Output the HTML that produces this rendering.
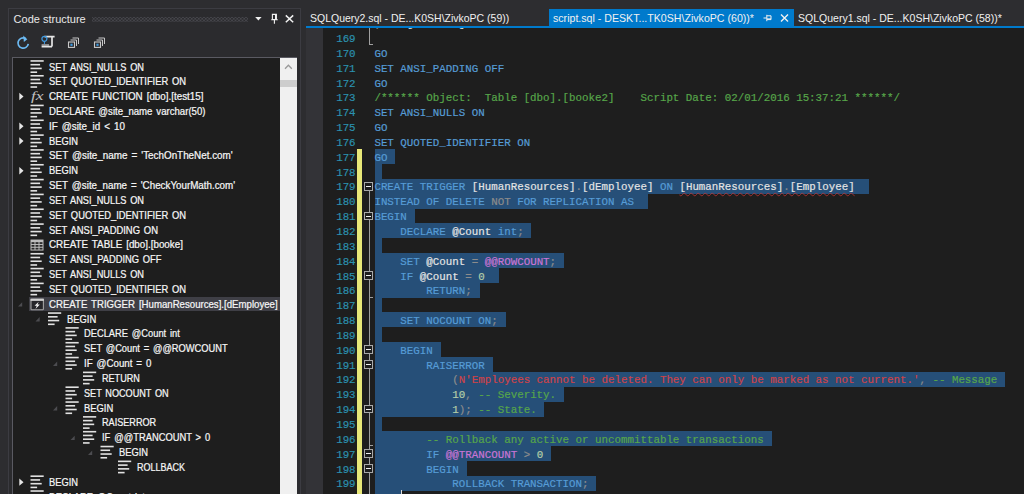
<!DOCTYPE html>
<html><head><meta charset="utf-8"><title>Code structure</title>
<style>
html,body{margin:0;padding:0}
body{width:1024px;height:494px;overflow:hidden;background:#2d2d30;position:relative;font-family:"Liberation Sans",sans-serif;color:#f1f1f1}
.abs{position:absolute}
#panel{left:8px;top:8px;width:293px;height:500px;border:1px solid #3c3c42;background:#2b2b2e;box-sizing:border-box}
#title{left:13.6px;top:12px;font-size:11px;line-height:15px;color:#e8e8e8;white-space:pre}
#grip{left:92px;top:17px;width:156px;height:5px;background-image:radial-gradient(circle,#48484e 0.6px,transparent 0.9px),radial-gradient(circle,#48484e 0.6px,transparent 0.9px);background-size:3.5px 3.5px;background-position:0 0,1.75px 1.75px}
#list{left:12px;top:57px;width:285px;height:450px;background:#1e1e1e;border-left:1px solid #5a5a62;border-top:1px solid #5a5a62;box-sizing:border-box}
#sb{left:280px;top:58px;width:17px;height:440px;background:#f0f0f0}
#thumb{left:280px;top:80px;width:17px;height:7px;background:#cdcdcd}
.row{position:absolute;left:0;height:15px;white-space:pre;font-size:10.1px;line-height:15px;color:#f6f6f6;-webkit-text-stroke:0.22px #f6f6f6;word-spacing:1.3px}
.row span{display:inline-block;transform-origin:0 50%}
#sel{left:29px;width:251px;height:14px;background:#3f3f46}
#tabline{left:306px;top:26px;width:718px;height:2px;background:#007acc}
#atab{left:549px;top:9px;width:245px;height:18px;background:#007acc}
.tab{position:absolute;top:11px;font-size:10.6px;line-height:15px;color:#f1f1f1;white-space:pre}
.tab span{display:inline-block;transform-origin:0 50%}
#strip{left:306px;top:27px;width:17px;height:470px;background:#333337}
#ed{left:323px;top:27px;width:701px;height:470px;background:#1e1e1e;overflow:hidden}
.ln,.cl{position:absolute;font-family:"Liberation Mono",monospace;font-size:10.82px;-webkit-text-stroke:0.18px currentColor;line-height:15px;height:15px;white-space:pre}
.ln{color:#2b91af;width:40px;text-align:right}
.k{color:#569cd6}.i{color:#e4e4e4}.o{color:#8c8c8c}.c{color:#57a64a}.s{color:#cf4349}.f{color:#c975d5}.n{color:#b5cea8}
.u{text-decoration:underline wavy rgba(200,50,50,.75);text-decoration-thickness:0.6px;text-underline-offset:1.5px}
.selb{position:absolute;background:#264f78}
.box{position:absolute;width:8.6px;height:8.6px;box-sizing:border-box;border:1px solid #a9a9a9;background:#1e1e1e}
.box i{position:absolute;left:1px;top:3px;width:5px;height:1px;background:#f0f0f0}
.vl{position:absolute;width:1px;background:#a0a0a0}
.hl{position:absolute;height:1px;background:#a0a0a0}
</style></head><body>

<div id="panel" class="abs"></div>
<div id="title" class="abs">Code structure</div>
<div id="grip" class="abs"></div>
<svg class="abs" style="left:254px;top:12px" width="42" height="14" viewBox="0 0 42 14">
<path d="M1.2 5 L7.6 5 L4.4 8.4 Z" fill="#f1f1f1"/>
<path d="M18.4 2.4 H22.4 V7.6 H18.4 Z M17.2 7.8 H23.8 M20.4 8 V11.8" fill="none" stroke="#f1f1f1" stroke-width="1.1"/>
<path d="M21.6 2.6 V7.4" stroke="#f1f1f1" stroke-width="1.2"/>
<path d="M31.8 3.4 L39.2 10.2 M39.2 3.4 L31.8 10.2" stroke="#f1f1f1" stroke-width="1.5" fill="none"/>
</svg>
<svg class="abs" style="left:16px;top:34px" width="92" height="17" viewBox="0 0 92 17">
<g fill="none" stroke="#6cbaf3" stroke-width="1.7">
<path d="M9.4 4.3 A5.2 5.2 0 1 0 12.3 9.9"/>
</g>
<path d="M7.2 1.5 L11.3 5.2 L7.9 8 Z" fill="#6cbaf3"/>
<g>
<path d="M28.5 2.6 H38.6 M36 2.6 V12.6 M25.6 12.6 H36" stroke="#e6e6e6" stroke-width="1.7" fill="none"/>
<path d="M25.6 11 H33" stroke="#e6e6e6" stroke-width="1" fill="none"/>
<circle cx="28.4" cy="4.8" r="2.5" fill="none" stroke="#3f9ae0" stroke-width="1.2"/>
<path d="M28.4 7.6 V10" stroke="#3f9ae0" stroke-width="1"/>
</g>
<g fill="none" stroke="#c8c8c8" stroke-width="1">
<path d="M56.5 4 H62.5 V10"/><path d="M54.5 6 H60.5 V12" />
<rect x="52.5" y="8" width="6" height="5.4" stroke-width="1.1"/>
</g>
<rect x="54.4" y="9.7" width="2.2" height="2.2" fill="#3f9ae0"/>
<g fill="none" stroke="#c8c8c8" stroke-width="1">
<path d="M82.5 4 H88.5 V10"/><path d="M80.5 6 H86.5 V12" />
<rect x="78.5" y="8" width="6" height="5.4" stroke-width="1.1"/>
</g>
<rect x="80.4" y="9.7" width="2.2" height="2.2" fill="#3f9ae0"/>
</svg>
<div id="list" class="abs"></div>
<div id="sel" class="abs" style="top:296.78px"></div>
<svg class="abs" style="left:0;top:0" width="300" height="494" viewBox="0 0 300 494"><rect x="30.50" y="60.15" width="13.2" height="1.6" fill="#e2e2e2"/><rect x="30.50" y="63.90" width="9.6" height="1.6" fill="#e2e2e2"/><rect x="30.50" y="67.65" width="11.2" height="1.6" fill="#e2e2e2"/><rect x="30.50" y="71.40" width="6.6" height="1.6" fill="#e2e2e2"/><rect x="30.50" y="74.98" width="13.2" height="1.6" fill="#e2e2e2"/><rect x="30.50" y="78.73" width="9.6" height="1.6" fill="#e2e2e2"/><rect x="30.50" y="82.48" width="11.2" height="1.6" fill="#e2e2e2"/><rect x="30.50" y="86.23" width="6.6" height="1.6" fill="#e2e2e2"/><text x="31.00" y="100.26" font-family="Liberation Serif,serif" font-style="italic" font-size="12.2" fill="#c0c0c0" textLength="12.6" lengthAdjust="spacingAndGlyphs">fx</text><path d="M19.30 92.86 L23.50 96.56 L19.30 100.26 Z" fill="#e6e6e6"/><rect x="30.50" y="104.64" width="13.2" height="1.6" fill="#e2e2e2"/><rect x="30.50" y="108.39" width="9.6" height="1.6" fill="#e2e2e2"/><rect x="30.50" y="112.14" width="11.2" height="1.6" fill="#e2e2e2"/><rect x="30.50" y="115.89" width="6.6" height="1.6" fill="#e2e2e2"/><rect x="30.50" y="119.47" width="13.2" height="1.6" fill="#e2e2e2"/><rect x="30.50" y="123.22" width="9.6" height="1.6" fill="#e2e2e2"/><rect x="30.50" y="126.97" width="11.2" height="1.6" fill="#e2e2e2"/><rect x="30.50" y="130.72" width="6.6" height="1.6" fill="#e2e2e2"/><path d="M19.30 122.52 L23.50 126.22 L19.30 129.92 Z" fill="#e6e6e6"/><rect x="30.50" y="134.30" width="13.2" height="1.6" fill="#e2e2e2"/><rect x="30.50" y="138.05" width="9.6" height="1.6" fill="#e2e2e2"/><rect x="30.50" y="141.80" width="11.2" height="1.6" fill="#e2e2e2"/><rect x="30.50" y="145.55" width="6.6" height="1.6" fill="#e2e2e2"/><path d="M19.30 137.35 L23.50 141.05 L19.30 144.75 Z" fill="#e6e6e6"/><rect x="30.50" y="149.13" width="13.2" height="1.6" fill="#e2e2e2"/><rect x="30.50" y="152.88" width="9.6" height="1.6" fill="#e2e2e2"/><rect x="30.50" y="156.63" width="11.2" height="1.6" fill="#e2e2e2"/><rect x="30.50" y="160.38" width="6.6" height="1.6" fill="#e2e2e2"/><rect x="30.50" y="163.96" width="13.2" height="1.6" fill="#e2e2e2"/><rect x="30.50" y="167.71" width="9.6" height="1.6" fill="#e2e2e2"/><rect x="30.50" y="171.46" width="11.2" height="1.6" fill="#e2e2e2"/><rect x="30.50" y="175.21" width="6.6" height="1.6" fill="#e2e2e2"/><path d="M19.30 167.01 L23.50 170.71 L19.30 174.41 Z" fill="#e6e6e6"/><rect x="30.50" y="178.79" width="13.2" height="1.6" fill="#e2e2e2"/><rect x="30.50" y="182.54" width="9.6" height="1.6" fill="#e2e2e2"/><rect x="30.50" y="186.29" width="11.2" height="1.6" fill="#e2e2e2"/><rect x="30.50" y="190.04" width="6.6" height="1.6" fill="#e2e2e2"/><rect x="30.50" y="193.62" width="13.2" height="1.6" fill="#e2e2e2"/><rect x="30.50" y="197.37" width="9.6" height="1.6" fill="#e2e2e2"/><rect x="30.50" y="201.12" width="11.2" height="1.6" fill="#e2e2e2"/><rect x="30.50" y="204.87" width="6.6" height="1.6" fill="#e2e2e2"/><rect x="30.50" y="208.45" width="13.2" height="1.6" fill="#e2e2e2"/><rect x="30.50" y="212.20" width="9.6" height="1.6" fill="#e2e2e2"/><rect x="30.50" y="215.95" width="11.2" height="1.6" fill="#e2e2e2"/><rect x="30.50" y="219.70" width="6.6" height="1.6" fill="#e2e2e2"/><rect x="30.50" y="223.28" width="13.2" height="1.6" fill="#e2e2e2"/><rect x="30.50" y="227.03" width="9.6" height="1.6" fill="#e2e2e2"/><rect x="30.50" y="230.78" width="11.2" height="1.6" fill="#e2e2e2"/><rect x="30.50" y="234.53" width="6.6" height="1.6" fill="#e2e2e2"/><rect x="30.50" y="239.56" width="13" height="11" fill="#bdbdbd"/><rect x="31.50" y="242.16" width="3" height="1.8" fill="#2a2a2a"/><rect x="31.50" y="244.96" width="3" height="1.8" fill="#2a2a2a"/><rect x="31.50" y="247.76" width="3" height="1.8" fill="#2a2a2a"/><rect x="35.50" y="242.16" width="3" height="1.8" fill="#2a2a2a"/><rect x="35.50" y="244.96" width="3" height="1.8" fill="#2a2a2a"/><rect x="35.50" y="247.76" width="3" height="1.8" fill="#2a2a2a"/><rect x="39.50" y="242.16" width="3" height="1.8" fill="#2a2a2a"/><rect x="39.50" y="244.96" width="3" height="1.8" fill="#2a2a2a"/><rect x="39.50" y="247.76" width="3" height="1.8" fill="#2a2a2a"/><rect x="30.50" y="252.94" width="13.2" height="1.6" fill="#e2e2e2"/><rect x="30.50" y="256.69" width="9.6" height="1.6" fill="#e2e2e2"/><rect x="30.50" y="260.44" width="11.2" height="1.6" fill="#e2e2e2"/><rect x="30.50" y="264.19" width="6.6" height="1.6" fill="#e2e2e2"/><rect x="30.50" y="267.77" width="13.2" height="1.6" fill="#e2e2e2"/><rect x="30.50" y="271.52" width="9.6" height="1.6" fill="#e2e2e2"/><rect x="30.50" y="275.27" width="11.2" height="1.6" fill="#e2e2e2"/><rect x="30.50" y="279.02" width="6.6" height="1.6" fill="#e2e2e2"/><rect x="30.50" y="282.60" width="13.2" height="1.6" fill="#e2e2e2"/><rect x="30.50" y="286.35" width="9.6" height="1.6" fill="#e2e2e2"/><rect x="30.50" y="290.10" width="11.2" height="1.6" fill="#e2e2e2"/><rect x="30.50" y="293.85" width="6.6" height="1.6" fill="#e2e2e2"/><rect x="31.00" y="299.18" width="12.4" height="10.6" rx="0.8" fill="#26262a" stroke="#a2a2a2" stroke-width="1.1"/><rect x="30.50" y="298.68" width="13.4" height="2.2" fill="#d0d0d0"/><path d="M38.70 301.68 L34.60 305.68 H36.80 L35.50 308.88 L39.80 304.48 H37.50 Z" fill="#f4f4f4"/><path d="M22.20 302.18 V306.58 H18.00 Z" fill="#4c4c50"/><rect x="48.00" y="312.26" width="13.2" height="1.6" fill="#e2e2e2"/><rect x="48.00" y="316.01" width="9.6" height="1.6" fill="#e2e2e2"/><rect x="48.00" y="319.76" width="11.2" height="1.6" fill="#e2e2e2"/><rect x="48.00" y="323.51" width="6.6" height="1.6" fill="#e2e2e2"/><path d="M39.70 317.01 V321.41 H35.50 Z" fill="#4c4c50"/><rect x="65.50" y="327.09" width="13.2" height="1.6" fill="#e2e2e2"/><rect x="65.50" y="330.84" width="9.6" height="1.6" fill="#e2e2e2"/><rect x="65.50" y="334.59" width="11.2" height="1.6" fill="#e2e2e2"/><rect x="65.50" y="338.34" width="6.6" height="1.6" fill="#e2e2e2"/><rect x="65.50" y="341.92" width="13.2" height="1.6" fill="#e2e2e2"/><rect x="65.50" y="345.67" width="9.6" height="1.6" fill="#e2e2e2"/><rect x="65.50" y="349.42" width="11.2" height="1.6" fill="#e2e2e2"/><rect x="65.50" y="353.17" width="6.6" height="1.6" fill="#e2e2e2"/><rect x="65.50" y="356.75" width="13.2" height="1.6" fill="#e2e2e2"/><rect x="65.50" y="360.50" width="9.6" height="1.6" fill="#e2e2e2"/><rect x="65.50" y="364.25" width="11.2" height="1.6" fill="#e2e2e2"/><rect x="65.50" y="368.00" width="6.6" height="1.6" fill="#e2e2e2"/><path d="M57.20 361.50 V365.90 H53.00 Z" fill="#4c4c50"/><rect x="83.00" y="371.58" width="13.2" height="1.6" fill="#e2e2e2"/><rect x="83.00" y="375.33" width="9.6" height="1.6" fill="#e2e2e2"/><rect x="83.00" y="379.08" width="11.2" height="1.6" fill="#e2e2e2"/><rect x="83.00" y="382.83" width="6.6" height="1.6" fill="#e2e2e2"/><rect x="65.50" y="386.41" width="13.2" height="1.6" fill="#e2e2e2"/><rect x="65.50" y="390.16" width="9.6" height="1.6" fill="#e2e2e2"/><rect x="65.50" y="393.91" width="11.2" height="1.6" fill="#e2e2e2"/><rect x="65.50" y="397.66" width="6.6" height="1.6" fill="#e2e2e2"/><rect x="65.50" y="401.24" width="13.2" height="1.6" fill="#e2e2e2"/><rect x="65.50" y="404.99" width="9.6" height="1.6" fill="#e2e2e2"/><rect x="65.50" y="408.74" width="11.2" height="1.6" fill="#e2e2e2"/><rect x="65.50" y="412.49" width="6.6" height="1.6" fill="#e2e2e2"/><path d="M57.20 405.99 V410.39 H53.00 Z" fill="#4c4c50"/><rect x="83.00" y="416.07" width="13.2" height="1.6" fill="#e2e2e2"/><rect x="83.00" y="419.82" width="9.6" height="1.6" fill="#e2e2e2"/><rect x="83.00" y="423.57" width="11.2" height="1.6" fill="#e2e2e2"/><rect x="83.00" y="427.32" width="6.6" height="1.6" fill="#e2e2e2"/><rect x="83.00" y="430.90" width="13.2" height="1.6" fill="#e2e2e2"/><rect x="83.00" y="434.65" width="9.6" height="1.6" fill="#e2e2e2"/><rect x="83.00" y="438.40" width="11.2" height="1.6" fill="#e2e2e2"/><rect x="83.00" y="442.15" width="6.6" height="1.6" fill="#e2e2e2"/><path d="M74.70 435.65 V440.05 H70.50 Z" fill="#4c4c50"/><rect x="100.50" y="445.73" width="13.2" height="1.6" fill="#e2e2e2"/><rect x="100.50" y="449.48" width="9.6" height="1.6" fill="#e2e2e2"/><rect x="100.50" y="453.23" width="11.2" height="1.6" fill="#e2e2e2"/><rect x="100.50" y="456.98" width="6.6" height="1.6" fill="#e2e2e2"/><path d="M92.20 450.48 V454.88 H88.00 Z" fill="#4c4c50"/><rect x="118.00" y="460.56" width="13.2" height="1.6" fill="#e2e2e2"/><rect x="118.00" y="464.31" width="9.6" height="1.6" fill="#e2e2e2"/><rect x="118.00" y="468.06" width="11.2" height="1.6" fill="#e2e2e2"/><rect x="118.00" y="471.81" width="6.6" height="1.6" fill="#e2e2e2"/><rect x="30.50" y="475.39" width="13.2" height="1.6" fill="#e2e2e2"/><rect x="30.50" y="479.14" width="9.6" height="1.6" fill="#e2e2e2"/><rect x="30.50" y="482.89" width="11.2" height="1.6" fill="#e2e2e2"/><rect x="30.50" y="486.64" width="6.6" height="1.6" fill="#e2e2e2"/><path d="M19.30 478.44 L23.50 482.14 L19.30 485.84 Z" fill="#e6e6e6"/><rect x="30.50" y="490.22" width="13.2" height="1.6" fill="#e2e2e2"/><rect x="30.50" y="493.97" width="9.6" height="1.6" fill="#e2e2e2"/><rect x="30.50" y="497.72" width="11.2" height="1.6" fill="#e2e2e2"/><rect x="30.50" y="501.47" width="6.6" height="1.6" fill="#e2e2e2"/></svg>
<div class="row" style="left:49.30px;top:59.50px"><span style="transform:scaleX(0.9139)">SET ANSI_NULLS ON</span></div>
<div class="row" style="left:49.30px;top:74.33px"><span style="transform:scaleX(0.9284)">SET QUOTED_IDENTIFIER ON</span></div>
<div class="row" style="left:49.30px;top:89.16px"><span style="transform:scaleX(0.9716)">CREATE FUNCTION [dbo].[test15]</span></div>
<div class="row" style="left:49.30px;top:103.99px"><span style="transform:scaleX(0.9525)">DECLARE @site_name varchar(50)</span></div>
<div class="row" style="left:49.30px;top:118.82px"><span style="transform:scaleX(0.9750)">IF @site_id &lt; 10</span></div>
<div class="row" style="left:49.30px;top:133.65px"><span style="transform:scaleX(0.9229)">BEGIN</span></div>
<div class="row" style="left:49.30px;top:148.48px"><span style="transform:scaleX(0.9766)">SET @site_name = &#x27;TechOnTheNet.com&#x27;</span></div>
<div class="row" style="left:49.30px;top:163.31px"><span style="transform:scaleX(0.9229)">BEGIN</span></div>
<div class="row" style="left:49.30px;top:178.14px"><span style="transform:scaleX(0.9710)">SET @site_name = &#x27;CheckYourMath.com&#x27;</span></div>
<div class="row" style="left:49.30px;top:192.97px"><span style="transform:scaleX(0.9139)">SET ANSI_NULLS ON</span></div>
<div class="row" style="left:49.30px;top:207.80px"><span style="transform:scaleX(0.9284)">SET QUOTED_IDENTIFIER ON</span></div>
<div class="row" style="left:49.30px;top:222.63px"><span style="transform:scaleX(0.9344)">SET ANSI_PADDING ON</span></div>
<div class="row" style="left:49.30px;top:237.46px"><span style="transform:scaleX(0.9716)">CREATE TABLE [dbo].[booke]</span></div>
<div class="row" style="left:49.30px;top:252.29px"><span style="transform:scaleX(0.9244)">SET ANSI_PADDING OFF</span></div>
<div class="row" style="left:49.30px;top:267.12px"><span style="transform:scaleX(0.9139)">SET ANSI_NULLS ON</span></div>
<div class="row" style="left:49.30px;top:281.95px"><span style="transform:scaleX(0.9284)">SET QUOTED_IDENTIFIER ON</span></div>
<div class="row" style="left:49.30px;top:296.78px"><span style="transform:scaleX(0.9544)">CREATE TRIGGER [HumanResources].[dEmployee]</span></div>
<div class="row" style="left:66.80px;top:311.61px"><span style="transform:scaleX(0.9293)">BEGIN</span></div>
<div class="row" style="left:84.30px;top:326.44px"><span style="transform:scaleX(0.9235)">DECLARE @Count int</span></div>
<div class="row" style="left:84.30px;top:341.27px"><span style="transform:scaleX(0.9212)">SET @Count = @@ROWCOUNT</span></div>
<div class="row" style="left:84.30px;top:356.10px"><span style="transform:scaleX(0.9631)">IF @Count = 0</span></div>
<div class="row" style="left:101.80px;top:370.93px"><span style="transform:scaleX(0.8987)">RETURN</span></div>
<div class="row" style="left:84.30px;top:385.76px"><span style="transform:scaleX(0.9044)">SET NOCOUNT ON</span></div>
<div class="row" style="left:84.30px;top:400.59px"><span style="transform:scaleX(0.9293)">BEGIN</span></div>
<div class="row" style="left:101.80px;top:415.42px"><span style="transform:scaleX(0.9031)">RAISERROR</span></div>
<div class="row" style="left:101.80px;top:430.25px"><span style="transform:scaleX(0.9281)">IF @@TRANCOUNT &gt; 0</span></div>
<div class="row" style="left:119.30px;top:445.08px"><span style="transform:scaleX(0.9261)">BEGIN</span></div>
<div class="row" style="left:136.80px;top:459.91px"><span style="transform:scaleX(0.8931)">ROLLBACK</span></div>
<div class="row" style="left:49.30px;top:474.74px"><span style="transform:scaleX(0.9229)">BEGIN</span></div>
<div class="row" style="left:49.30px;top:489.57px"><span style="transform:scaleX(0.9235)">DECLARE @Count int</span></div>
<div id="sb" class="abs"></div><div id="thumb" class="abs"></div>
<svg class="abs" style="left:280px;top:58px" width="17" height="17" viewBox="0 0 17 17"><path d="M5 10.8 L8.4 7.2 L11.8 10.8" fill="none" stroke="#9a9a9a" stroke-width="1.3"/></svg>
<div id="atab" class="abs"></div>
<div class="tab" style="left:309.8px"><span style="transform:scaleX(0.9894)">SQLQuery2.sql - DE...K0SH\ZivkoPC (59))</span></div>
<div class="tab" style="left:553px"><span style="transform:scaleX(1.0013)">script.sql - DESKT...TK0SH\ZivkoPC (60))*</span></div>
<div class="tab" style="left:798px"><span style="transform:scaleX(0.9919)">SQLQuery1.sql - DE...K0SH\ZivkoPC (58))*</span></div>
<svg class="abs" style="left:762px;top:12px" width="30" height="12" viewBox="0 0 30 12">
<path d="M1.5 6 H4.6 M4.8 2.8 V9.2 M5 3.8 H9 V7.6 H5 M5 6.9 H9" fill="none" stroke="#f1f1f1" stroke-width="1"/>
<path d="M19 2.6 L26 9.4 M26 2.6 L19 9.4" stroke="#f1f1f1" stroke-width="1.4" fill="none"/>
</svg>
<div id="strip" class="abs"></div>
<div id="ed" class="abs">
<div class="selb" style="left:51.90px;top:122.00px;width:20.28px;height:15.15px"></div>
<div class="selb" style="left:51.90px;top:136.84px;width:7.30px;height:15.15px"></div>
<div class="selb" style="left:51.90px;top:151.69px;width:494.05px;height:15.15px"></div>
<div class="selb" style="left:51.90px;top:166.53px;width:273.39px;height:15.15px"></div>
<div class="selb" style="left:51.90px;top:181.38px;width:39.75px;height:15.15px"></div>
<div class="selb" style="left:51.90px;top:196.23px;width:156.57px;height:15.15px"></div>
<div class="selb" style="left:51.90px;top:211.07px;width:7.30px;height:15.15px"></div>
<div class="selb" style="left:51.90px;top:225.92px;width:189.02px;height:15.15px"></div>
<div class="selb" style="left:51.90px;top:240.76px;width:124.12px;height:15.15px"></div>
<div class="selb" style="left:51.90px;top:255.61px;width:104.65px;height:15.15px"></div>
<div class="selb" style="left:51.90px;top:270.45px;width:7.30px;height:15.15px"></div>
<div class="selb" style="left:51.90px;top:285.30px;width:130.61px;height:15.15px"></div>
<div class="selb" style="left:51.90px;top:300.14px;width:7.30px;height:15.15px"></div>
<div class="selb" style="left:51.90px;top:314.99px;width:65.71px;height:15.15px"></div>
<div class="selb" style="left:51.90px;top:329.83px;width:117.63px;height:15.15px"></div>
<div class="selb" style="left:51.90px;top:344.68px;width:630.34px;height:15.15px"></div>
<div class="selb" style="left:51.90px;top:359.52px;width:189.02px;height:15.15px"></div>
<div class="selb" style="left:51.90px;top:374.37px;width:169.55px;height:15.15px"></div>
<div class="selb" style="left:51.90px;top:389.21px;width:7.30px;height:15.15px"></div>
<div class="selb" style="left:51.90px;top:404.06px;width:396.70px;height:15.15px"></div>
<div class="selb" style="left:51.90px;top:418.90px;width:176.04px;height:15.15px"></div>
<div class="selb" style="left:51.90px;top:433.75px;width:91.67px;height:15.15px"></div>
<div class="selb" style="left:51.90px;top:448.59px;width:221.47px;height:15.15px"></div>
<div class="selb" style="left:51.90px;top:463.44px;width:25.96px;height:14.85px"></div>
<div class="abs" style="left:78px;top:463.44px;width:1px;height:15px;background:#dcdcdc"></div>
<div class="abs" style="left:34.20px;top:122.00px;width:5px;height:400px;background:#e8e878"></div>
<div class="vl" style="left:46px;top:0;height:18.08px"></div>
<div class="hl" style="left:46px;top:17.08px;width:4px"></div>
<div class="vl" style="left:46px;top:158.69px;height:400px"></div>
<div class="hl" style="left:46px;top:269.95px;width:4px"></div>
<div class="hl" style="left:46px;top:418.40px;width:4px"></div>
<div class="box" style="left:41.20px;top:155.09px"><i></i></div>
<div class="box" style="left:41.20px;top:184.78px"><i></i></div>
<div class="box" style="left:41.20px;top:244.16px"><i></i></div>
<div class="box" style="left:41.20px;top:318.38px"><i></i></div>
<div class="box" style="left:41.20px;top:333.23px"><i></i></div>
<div class="box" style="left:41.20px;top:377.76px"><i></i></div>
<div class="box" style="left:41.20px;top:422.30px"><i></i></div>
<div class="box" style="left:41.20px;top:437.14px"><i></i></div>
<div class="ln" style="left:-7.40px;top:-9.81px">168</div>
<div class="cl" style="left:51.40px;top:-9.81px"><span class="o">) </span><span class="k">ON </span><span class="i">[PRIMARY]</span></div>
<div class="ln" style="left:-7.40px;top:5.04px">169</div>
<div class="ln" style="left:-7.40px;top:19.88px">170</div>
<div class="cl" style="left:51.40px;top:19.88px"><span class="k">GO</span></div>
<div class="ln" style="left:-7.40px;top:34.73px">171</div>
<div class="cl" style="left:51.40px;top:34.73px"><span class="k">SET ANSI_PADDING OFF</span></div>
<div class="ln" style="left:-7.40px;top:49.57px">172</div>
<div class="cl" style="left:51.40px;top:49.57px"><span class="k">GO</span></div>
<div class="ln" style="left:-7.40px;top:64.42px">173</div>
<div class="cl" style="left:51.40px;top:64.42px"><span class="c">/****** Object:  Table [dbo].[booke2]    Script Date: 02/01/2016 15:37:21 ******/</span></div>
<div class="ln" style="left:-7.40px;top:79.27px">174</div>
<div class="cl" style="left:51.40px;top:79.27px"><span class="k">SET ANSI_NULLS ON</span></div>
<div class="ln" style="left:-7.40px;top:94.11px">175</div>
<div class="cl" style="left:51.40px;top:94.11px"><span class="k">GO</span></div>
<div class="ln" style="left:-7.40px;top:108.95px">176</div>
<div class="cl" style="left:51.40px;top:108.95px"><span class="k">SET QUOTED_IDENTIFIER ON</span></div>
<div class="ln" style="left:-7.40px;top:123.80px">177</div>
<div class="cl" style="left:51.40px;top:123.80px"><span class="k">GO</span></div>
<div class="ln" style="left:-7.40px;top:138.65px">178</div>
<div class="ln" style="left:-7.40px;top:153.49px">179</div>
<div class="cl" style="left:51.40px;top:153.49px"><span class="k">CREATE TRIGGER </span><span class="i">[HumanResources]</span><span class="o">.</span><span class="i">[dEmployee]</span><span class="k"> ON </span><span class="i u">[HumanResources]</span><span class="o u">.</span><span class="i u">[Employee]</span><span class="o"> </span></div>
<div class="ln" style="left:-7.40px;top:168.34px">180</div>
<div class="cl" style="left:51.40px;top:168.34px"><span class="k">INSTEAD OF DELETE </span><span class="o">NOT</span><span class="k"> FOR REPLICATION AS </span></div>
<div class="ln" style="left:-7.40px;top:183.18px">181</div>
<div class="cl" style="left:51.40px;top:183.18px"><span class="k">BEGIN</span></div>
<div class="ln" style="left:-7.40px;top:198.03px">182</div>
<div class="cl" style="left:51.40px;top:198.03px"><span class="k">    DECLARE </span><span class="i">@Count </span><span class="k">int</span><span class="o">;</span></div>
<div class="ln" style="left:-7.40px;top:212.87px">183</div>
<div class="ln" style="left:-7.40px;top:227.72px">184</div>
<div class="cl" style="left:51.40px;top:227.72px"><span class="k">    SET </span><span class="i">@Count </span><span class="o">= </span><span class="f">@@ROWCOUNT</span><span class="o">;</span></div>
<div class="ln" style="left:-7.40px;top:242.56px">185</div>
<div class="cl" style="left:51.40px;top:242.56px"><span class="k">    IF </span><span class="i">@Count </span><span class="o">= </span><span class="n">0</span><span class="o"> </span></div>
<div class="ln" style="left:-7.40px;top:257.41px">186</div>
<div class="cl" style="left:51.40px;top:257.41px"><span class="k">        RETURN</span><span class="o">;</span></div>
<div class="ln" style="left:-7.40px;top:272.25px">187</div>
<div class="ln" style="left:-7.40px;top:287.10px">188</div>
<div class="cl" style="left:51.40px;top:287.10px"><span class="k">    SET NOCOUNT ON</span><span class="o">;</span></div>
<div class="ln" style="left:-7.40px;top:301.94px">189</div>
<div class="ln" style="left:-7.40px;top:316.79px">190</div>
<div class="cl" style="left:51.40px;top:316.79px"><span class="k">    BEGIN</span></div>
<div class="ln" style="left:-7.40px;top:331.63px">191</div>
<div class="cl" style="left:51.40px;top:331.63px"><span class="k">        RAISERROR</span></div>
<div class="ln" style="left:-7.40px;top:346.48px">192</div>
<div class="cl" style="left:51.40px;top:346.48px"><span class="o">            (</span><span class="s">N&#x27;Employees cannot be deleted. They can only be marked as not current.&#x27;</span><span class="o">, </span><span class="c">-- Message</span></div>
<div class="ln" style="left:-7.40px;top:361.32px">193</div>
<div class="cl" style="left:51.40px;top:361.32px"><span class="n">            10</span><span class="o">, </span><span class="c">-- Severity.</span></div>
<div class="ln" style="left:-7.40px;top:376.17px">194</div>
<div class="cl" style="left:51.40px;top:376.17px"><span class="n">            1</span><span class="o">); </span><span class="c">-- State.</span></div>
<div class="ln" style="left:-7.40px;top:391.01px">195</div>
<div class="ln" style="left:-7.40px;top:405.86px">196</div>
<div class="cl" style="left:51.40px;top:405.86px"><span class="c">        -- Rollback any active or uncommittable transactions</span></div>
<div class="ln" style="left:-7.40px;top:420.70px">197</div>
<div class="cl" style="left:51.40px;top:420.70px"><span class="k">        IF </span><span class="f">@@TRANCOUNT </span><span class="o">&gt; </span><span class="n">0</span></div>
<div class="ln" style="left:-7.40px;top:435.55px">198</div>
<div class="cl" style="left:51.40px;top:435.55px"><span class="k">        BEGIN</span></div>
<div class="ln" style="left:-7.40px;top:450.39px">199</div>
<div class="cl" style="left:51.40px;top:450.39px"><span class="k">            ROLLBACK TRANSACTION</span><span class="o">;</span></div>
</div>
<div id="tabline" class="abs"></div>
</body></html>
